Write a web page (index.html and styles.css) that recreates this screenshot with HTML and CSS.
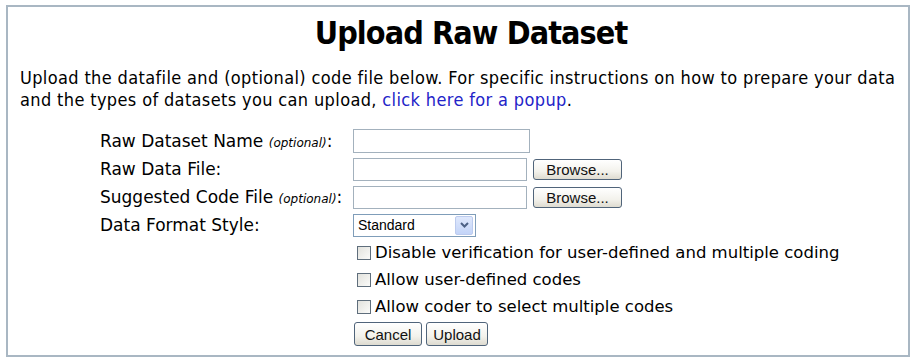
FILE: index.html
```html
<!DOCTYPE html>
<html>
<head>
<meta charset="utf-8">
<link rel="stylesheet" href="styles.css">
</head>
<body>
<div class="frame">
  <h1 class="title">Upload Raw Dataset</h1>
  <p class="intro">Upload the datafile and (optional) code file below. For specific instructions on how to prepare your data and the types of datasets you can upload, <a class="link" href="#">click here for a popup</a>.</p>
  <div class="form">
    <div class="lbl"><span>Raw Dataset Name <i class="opt">(optional)</i>:</span></div>
    <div class="cell"><span class="textbox tb-wide"></span></div>

    <div class="lbl"><span>Raw Data File:</span></div>
    <div class="cell"><span class="textbox"></span><span class="btn browse">Browse...</span></div>

    <div class="lbl"><span>Suggested Code File <i class="opt">(optional)</i>:</span></div>
    <div class="cell"><span class="textbox"></span><span class="btn browse">Browse...</span></div>

    <div class="lbl"><span>Data Format Style:</span></div>
    <div class="cell"><span class="select"><span class="sel-text">Standard</span><span class="sel-arrow"><svg width="9" height="6" viewBox="0 0 9 6"><path d="M1 1 L4.5 4.5 L8 1" fill="none" stroke="#4d6185" stroke-width="2"/></svg></span></span></div>

    <div class="lbl"></div>
    <div class="cell chk-row"><span class="chk"></span><span>Disable verification for user-defined and multiple coding</span></div>

    <div class="lbl"></div>
    <div class="cell chk-row"><span class="chk"></span><span>Allow user-defined codes</span></div>

    <div class="lbl"></div>
    <div class="cell chk-row"><span class="chk"></span><span>Allow coder to select multiple codes</span></div>

    <div class="lbl"></div>
    <div class="cell btns"><span class="btn cancel">Cancel</span><span class="btn upload">Upload</span></div>
  </div>
</div>
</body>
</html>
```

FILE: styles.css
```css
html, body {
  margin: 0;
  padding: 0;
  background: #ffffff;
}
body {
  font-family: "DejaVu Sans", Verdana, sans-serif;
  color: #000;
}
.frame {
  margin: 5px 0 0 6px;
  width: 904px;
  height: 352px;
  box-sizing: border-box;
  border: 2px solid #a9b7c3;
  padding: 0 6px 0 12px;
}
.title {
  margin: 0;
  padding: 7px 0 0 20px;
  height: 48px;
  box-sizing: border-box;
  text-align: center;
  font-family: "DejaVu Sans Condensed", "DejaVu Sans", sans-serif;
  font-weight: bold;
  font-size: 32px;
  letter-spacing: -0.9px;
  line-height: 38px;
}
.intro {
  margin: 12px 0 0 0;
  font-family: "DejaVu Sans Condensed", "DejaVu Sans", sans-serif;
  font-size: 18px;
  letter-spacing: 0.36px;
  line-height: 22px;
}
.link {
  color: #2323c8;
  text-decoration: none;
}
.form {
  margin: 16px 0 0 80px;
  display: grid;
  grid-template-columns: 253px auto;
  grid-template-rows: 28px 28px 28px 28px 27px 27px 27px 28px;
  font-size: 17px;
}
.lbl {
  display: flex;
  align-items: center;
  white-space: nowrap;
}
.opt {
  font-size: 12px;
}
.cell {
  display: flex;
  align-items: center;
}
.textbox {
  display: inline-block;
  width: 174px;
  height: 23px;
  box-sizing: border-box;
  border: 1px solid #a3b1bd;
  background: #fff;
}
.tb-wide {
  width: 177px;
  height: 24px;
}
.btn {
  display: inline-flex;
  align-items: center;
  justify-content: center;
  box-sizing: border-box;
  border: 1px solid #50647a;
  border-radius: 3px;
  background: linear-gradient(#ffffff, #f3f2ec 60%, #dedbd0);
  font-family: "Liberation Sans", Arial, sans-serif;
  font-size: 15px;
  color: #111;
}
.browse {
  width: 89px;
  height: 21px;
  margin-left: 6px;
}
.select {
  display: inline-flex;
  align-items: center;
  justify-content: space-between;
  width: 123px;
  height: 23px;
  box-sizing: border-box;
  border: 1px solid #7f9db9;
  padding: 0 2px 0 4px;
  font-family: "Liberation Sans", Arial, sans-serif;
  font-size: 14px;
}
.sel-arrow {
  display: inline-flex;
  align-items: center;
  justify-content: center;
  width: 18px;
  height: 19px;
  border-radius: 2px;
  background: linear-gradient(#dfe8fc, #c3d4f8);
  border: 1px solid #bccbee;
  box-sizing: border-box;
}
.chk-row {
  font-size: 16.5px;
  padding-left: 4px;
  white-space: nowrap;
}
.chk {
  display: inline-block;
  width: 14px;
  height: 14px;
  box-sizing: border-box;
  border: 1px solid #5f6e7c;
  background: linear-gradient(135deg, #e2e2dd, #fbfbf9);
  margin-right: 4px;
}
.btns {
  gap: 4px;
  padding-left: 1px;
}
.cancel {
  width: 68px;
  height: 24px;
}
.upload {
  width: 62px;
  height: 24px;
}
```
